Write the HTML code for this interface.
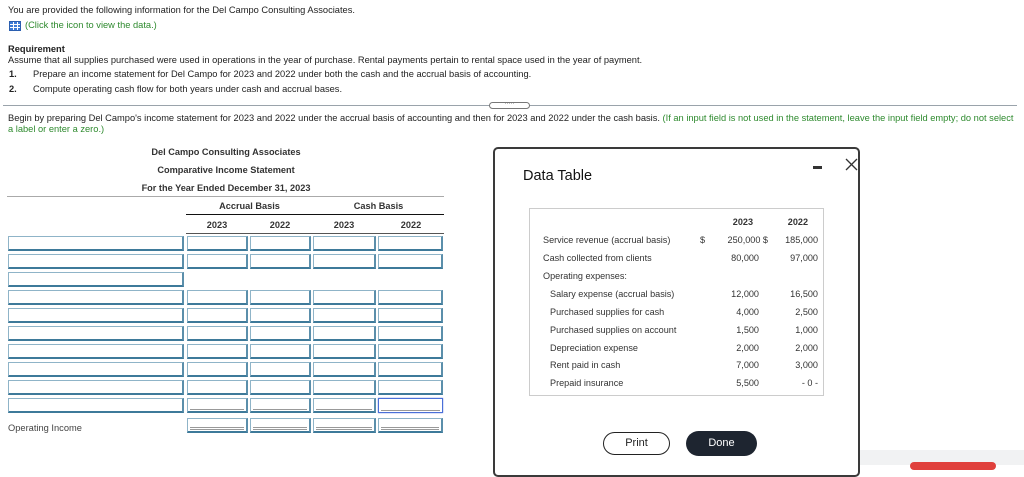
<!DOCTYPE html>
<html><head><style>
*{margin:0;padding:0;box-sizing:border-box}
body{width:1024px;height:465px;overflow:hidden;background:#fff;font-family:"Liberation Sans",Arial,sans-serif;color:#222;position:relative;font-size:9.3px}
.a{position:absolute;white-space:nowrap}
.g{color:#2e8a2e}
.b{font-weight:bold}
.in{position:absolute;height:15px;border:1px solid #8fb4c8;border-bottom:2px solid #3e7a9a;border-right:2px solid #5b8fab;background:#fff}
.h{font-weight:bold;color:#333;font-size:9.2px}
.dt{font-size:9.1px;color:#333}
</style></head><body>
<div class="a" style="left:8px;top:5px">You are provided the following information for the Del Campo Consulting Associates.</div>
<div class="a" style="left:9px;top:21px;width:12px;height:10px;background:#3c7bd6;border:1px solid #2b5fb0;background-image:linear-gradient(#fff 0 0),linear-gradient(#fff 0 0),linear-gradient(#fff 0 0),linear-gradient(#fff 0 0);background-size:1px 10px,1px 10px,12px 1px,12px 1px;background-position:3px 0,7px 0,0 2px,0 5px;background-repeat:no-repeat"></div>
<div class="a g" style="left:25px;top:20px">(Click the icon to view the data.)</div>
<div class="a b" style="left:8px;top:44px">Requirement</div>
<div class="a" style="left:8px;top:55px">Assume that all supplies purchased were used in operations in the year of purchase. Rental payments pertain to rental space used in the year of payment.</div>
<div class="a b" style="left:9px;top:69px">1.</div><div class="a" style="left:33px;top:69px">Prepare an income statement for Del Campo for 2023 and 2022 under both the cash and the accrual basis of accounting.</div>
<div class="a b" style="left:9px;top:84px">2.</div><div class="a" style="left:33px;top:84px">Compute operating cash flow for both years under cash and accrual bases.</div>
<div class="a" style="left:3px;top:105px;width:1014px;height:1px;background:#9aa3ab"></div>
<div class="a" style="left:489px;top:102px;width:41px;height:7px;border:1px solid #777;border-radius:4px;background:#fff;font-size:6px;line-height:3px;text-align:center;color:#555">·····</div>
<div class="a" style="left:8px;top:113px">Begin by preparing Del Campo's income statement for 2023 and 2022 under the accrual basis of accounting and then for 2023 and 2022 under the cash basis. <span class="g">(If an input field is not used in the statement, leave the input field empty; do not select</span></div>
<div class="a g" style="left:8px;top:124px">a label or enter a zero.)</div>

<div class="a h" style="left:0;width:452px;text-align:center;top:147px">Del Campo Consulting Associates</div>
<div class="a h" style="left:0;width:452px;text-align:center;top:165px">Comparative Income Statement</div>
<div class="a h" style="left:0;width:452px;text-align:center;top:183px">For the Year Ended December 31, 2023</div>
<div class="a" style="left:7px;top:196px;width:437px;height:1px;background:#aaa"></div>
<div class="a h" style="left:186px;width:127px;text-align:center;top:201px">Accrual Basis</div>
<div class="a h" style="left:313px;width:131px;text-align:center;top:201px">Cash Basis</div>
<div class="a" style="left:186px;top:214px;width:258px;height:1px;background:#111"></div>
<div class="a h" style="left:186px;width:62px;text-align:center;top:220px">2023</div>
<div class="a h" style="left:250px;width:60px;text-align:center;top:220px">2022</div>
<div class="a h" style="left:313px;width:62px;text-align:center;top:220px">2023</div>
<div class="a h" style="left:378px;width:66px;text-align:center;top:220px">2022</div>
<div class="a" style="left:186px;top:233px;width:258px;height:1px;background:#555"></div>

<div class="in" style="left:8px;top:236px;width:176px"></div>
<div class="in" style="left:8px;top:254px;width:176px"></div>
<div class="in" style="left:8px;top:272px;width:176px"></div>
<div class="in" style="left:8px;top:290px;width:176px"></div>
<div class="in" style="left:8px;top:308px;width:176px"></div>
<div class="in" style="left:8px;top:326px;width:176px"></div>
<div class="in" style="left:8px;top:344px;width:176px"></div>
<div class="in" style="left:8px;top:362px;width:176px"></div>
<div class="in" style="left:8px;top:380px;width:176px"></div>
<div class="in" style="left:8px;top:398px;width:176px"></div>
<div class="a" style="left:8px;top:423px;color:#444">Operating Income</div>

<div id="cols"></div>
<script>
var xs=[[187,61],[250,61],[313,63],[378,65]],ys=[236,254,290,308,326,344,362,380,398,418],h='';
ys.forEach(function(y,i){xs.forEach(function(c,j){
 var st='left:'+c[0]+'px;top:'+y+'px;width:'+c[1]+'px;';
 if(i==8&&j==3)st+='border:1px solid #4a6fd8;box-shadow:0 0 1px #4a6fd8;';
 var inner='';
 if(i==8)inner='<div style="position:absolute;left:2px;right:2px;bottom:1px;height:1px;background:#999"></div>';
 if(i==9)inner='<div style="position:absolute;left:2px;right:2px;bottom:1px;height:3px;border-top:1px solid #999;border-bottom:1px solid #999"></div>';
 h+='<div class="in" style="'+st+'">'+inner+'</div>';
});});
document.getElementById('cols').innerHTML=h;
</script>

<div class="a" style="left:860px;top:450px;width:164px;height:15px;background:#f1f2f3"></div>
<div class="a" style="left:910px;top:462px;width:86px;height:8px;border-radius:4px;background:#e0403c"></div>

<div class="a" style="left:493px;top:147px;width:367px;height:330px;border:2px solid #3a3a3a;border-radius:5px;background:#fff"></div>
<div class="a" style="left:523px;top:168px;font-size:14.5px;color:#111">Data Table</div>
<div class="a" style="left:813px;top:166px;width:9px;height:3px;background:#333"></div>
<svg class="a" style="left:845px;top:158px" width="13" height="13" viewBox="0 0 13 13"><path d="M1 1L12 12M12 1L1 12" stroke="#333" stroke-width="1.3"/></svg>
<div class="a" style="left:529px;top:208px;width:295px;height:188px;border:1px solid #ccc"></div>
<div class="a dt b" style="left:700px;width:53px;text-align:right;top:217px">2023</div>
<div class="a dt b" style="left:760px;width:48px;text-align:right;top:217px">2022</div>
<div class="a dt" style="left:543px;top:235px">Service revenue (accrual basis)</div>
<div class="a dt" style="left:543px;top:253px">Cash collected from clients</div>
<div class="a dt" style="left:543px;top:271px">Operating expenses:</div>
<div class="a dt" style="left:550px;top:289px">Salary expense (accrual basis)</div>
<div class="a dt" style="left:550px;top:307px">Purchased supplies for cash</div>
<div class="a dt" style="left:550px;top:325px">Purchased supplies on account</div>
<div class="a dt" style="left:550px;top:343px">Depreciation expense</div>
<div class="a dt" style="left:550px;top:360px">Rent paid in cash</div>
<div class="a dt" style="left:550px;top:378px">Prepaid insurance</div>
<div class="a dt" style="left:700px;top:235px">$</div>
<div class="a dt" style="left:700px;top:235px;width:68px;text-align:right">250,000 $</div>
<div class="a dt" style="left:760px;top:235px;width:58px;text-align:right">185,000</div>
<div class="a dt" style="left:700px;width:59px;text-align:right;top:253px">80,000</div><div class="a dt" style="left:760px;width:58px;text-align:right;top:253px">97,000</div>
<div class="a dt" style="left:700px;width:59px;text-align:right;top:289px">12,000</div><div class="a dt" style="left:760px;width:58px;text-align:right;top:289px">16,500</div>
<div class="a dt" style="left:700px;width:59px;text-align:right;top:307px">4,000</div><div class="a dt" style="left:760px;width:58px;text-align:right;top:307px">2,500</div>
<div class="a dt" style="left:700px;width:59px;text-align:right;top:325px">1,500</div><div class="a dt" style="left:760px;width:58px;text-align:right;top:325px">1,000</div>
<div class="a dt" style="left:700px;width:59px;text-align:right;top:343px">2,000</div><div class="a dt" style="left:760px;width:58px;text-align:right;top:343px">2,000</div>
<div class="a dt" style="left:700px;width:59px;text-align:right;top:360px">7,000</div><div class="a dt" style="left:760px;width:58px;text-align:right;top:360px">3,000</div>
<div class="a dt" style="left:700px;width:59px;text-align:right;top:378px">5,500</div><div class="a dt" style="left:760px;width:58px;text-align:right;top:378px">- 0 -</div>
<div class="a" style="left:603px;top:432px;width:67px;height:23px;border:1.5px solid #222;border-radius:12px;text-align:center;line-height:20px;font-size:11px;color:#222">Print</div>
<div class="a" style="left:686px;top:431px;width:71px;height:25px;background:#1e2530;border-radius:13px;text-align:center;line-height:25px;font-size:11px;color:#fff">Done</div>
</body></html>
